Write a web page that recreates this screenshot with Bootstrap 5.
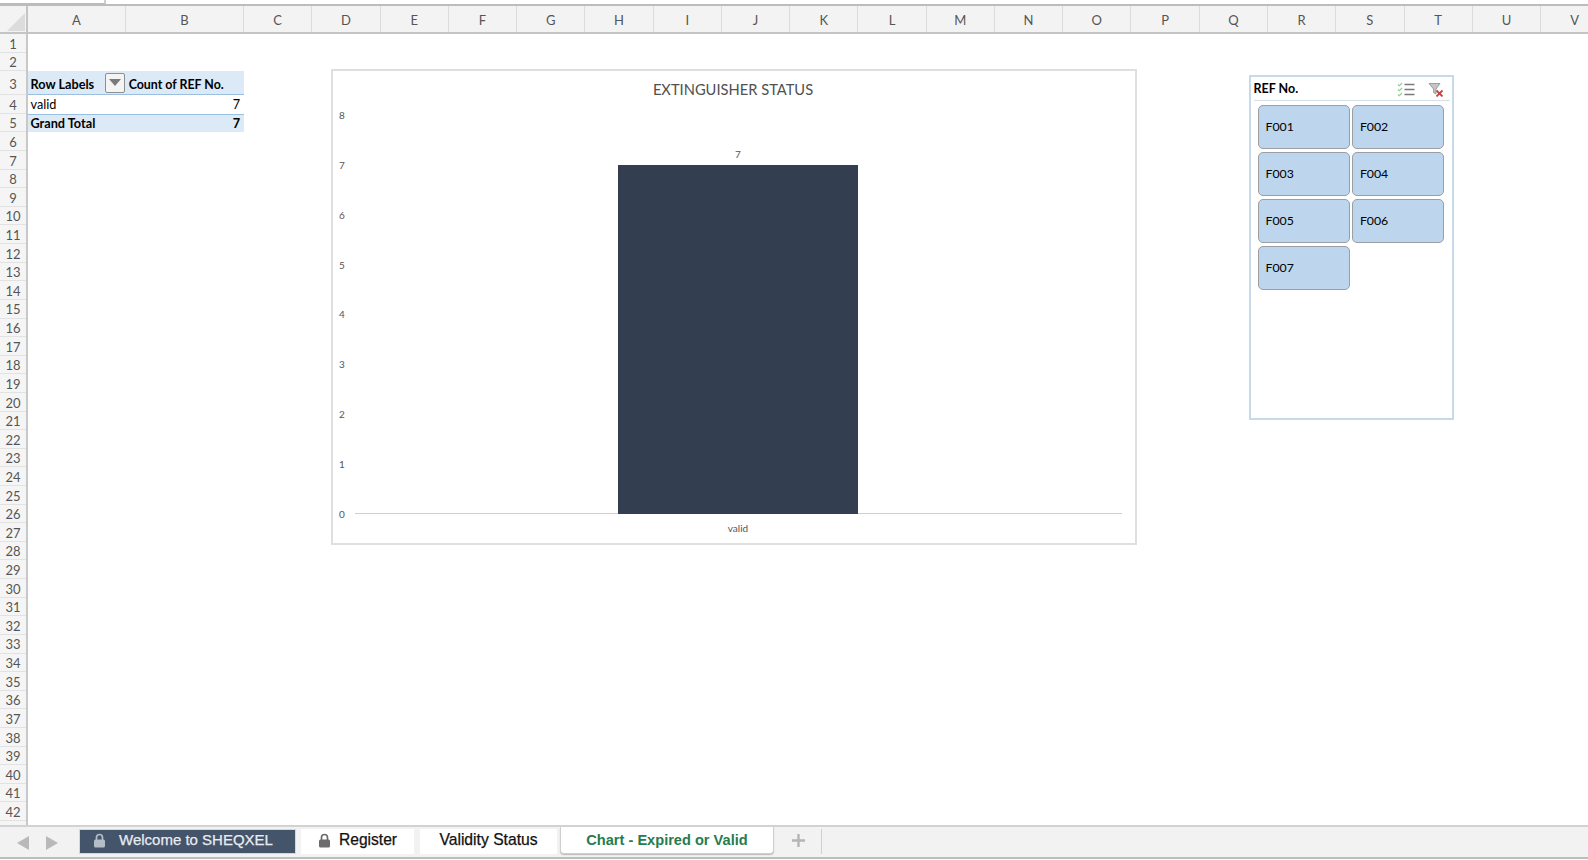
<!doctype html>
<html lang="en">
<head>
<meta charset="utf-8">
<title>Chart - Expired or Valid</title>
<link rel="stylesheet" href="https://cdn.jsdelivr.net/npm/bootstrap@5.3.0/dist/css/bootstrap.min.css">
<style>
html,body{height:100%;overflow:hidden;background:#fff;font-family:"Lato","Liberation Sans",sans-serif;color:#000}
.top-strip{height:6px;flex:none;border-bottom:2px solid #bcbcbc;background:#fff}
.strip-cell{width:106px;height:4px;border-right:2px solid #cfcfcf;border-bottom:1px solid #bcbcbc}
.col-head{height:28px;flex:none;background:#f3f3f3;border-bottom:2px solid #c4c4c4;display:grid;grid-template-columns:28px 98px 118px repeat(20,68.27px);font-size:13px;color:#555}
.col-head>div{display:flex;align-items:center;justify-content:center;border-right:1px solid #dcdcdc;padding-top:3px}
.col-head>.corner{border-right:2px solid #c4c4c4;padding:0}
.corner svg{width:18px;height:18px;margin-left:6px;margin-top:5px}
.sheet-body{flex:1 1 auto;min-height:0;display:flex;overflow:hidden}
.row-head{width:28px;flex:none;background:#f5f5f5;border-right:2px solid #c8c8c8;font-size:13px;color:#555;display:flex;flex-direction:column}
.row-head>div{height:18.62px;flex:none;display:flex;align-items:center;justify-content:center;border-bottom:1px solid #e2e2e2;padding-top:3px}
.row-head>div.tall{height:24px;padding-top:5px}
.canvas{position:relative;flex:1 1 auto;background:#fff}
.pivot{padding-top:37px;width:216px;font-size:12.7px;line-height:1}
.pv-row{display:flex;justify-content:space-between;align-items:center;height:18.6px;padding:1px 4px 0 2.5px}
.pv-head{height:24px;background:#dce9f6;border-bottom:1px solid #9bbfe0;font-weight:700;padding-top:4px;justify-content:flex-start}
.pv-total{background:#dce9f6;border-top:1px solid #9bbfe0;font-weight:700;padding-top:0}
.pv-count{font-size:12.4px;padding-top:1px}
.pv-drop{width:20px;height:20px;border:1px solid #8f8f8f;border-radius:2px;background:#f4f4f4;margin:-4px 4px 0 10.5px;display:flex;align-items:center;justify-content:center}
.pv-drop i{display:block;width:0;height:0;border-left:6px solid transparent;border-right:6px solid transparent;border-top:7px solid #7a7a7a}
.chart-box{position:absolute;left:303px;top:35px;width:806px;height:476px;border:2px solid #dfdfdf;background:#fff;color:#555}
.chart-title{position:absolute;left:0;right:2px;top:10px;text-align:center;font-size:14.7px;color:#505050;line-height:1.2}
.tick{position:absolute;left:6px;font-size:10px;line-height:12px;color:#555}
.axis{position:absolute;left:22px;right:13px;top:442px;height:1px;background:#cfcfcf}
.bar{position:absolute;left:285px;top:94px;width:240px;height:349px;background:#333f50}
.bar-val{position:absolute;left:285px;width:240px;top:77px;text-align:center;font-size:10px;line-height:12px;color:#555}
.cat{position:absolute;left:285px;width:240px;top:451px;text-align:center;font-size:10px;line-height:12px;color:#555}
.slicer{position:absolute;left:1221px;top:41px;width:205px;height:345px;border:2px solid #c6daec;background:#fff;padding:0 2.500px}
.sl-head{height:24px;display:flex;align-items:center;border-bottom:1px solid #d5dfe8;font-size:12.5px;font-weight:700;padding-top:1px}
.sl-icons{margin-left:auto;display:flex;gap:13px;align-items:center;padding-right:6px}
.sl-grid{display:grid;grid-template-columns:92px 92px;column-gap:2.4px;row-gap:3.2px;padding:3.500px 0 0 4px}
.sl-btn{height:44px;background:#bdd5ed;border:1.5px solid #9a9fa6;border-radius:5px;font-size:12.3px;display:flex;align-items:center;padding-left:7px;padding-top:1px}
.tabs-bar{height:34px;flex:none;margin-bottom:1px;background:#f2f2f2;border-top:2px solid #d2d2d2;border-bottom:2px solid #bdbdbd;display:flex;align-items:stretch;font-family:"Liberation Sans",Arial,sans-serif;font-size:15px;-webkit-text-stroke:.25px currentColor}
.nav-arrows{width:78px;flex:none;display:flex;align-items:center;justify-content:center;gap:17px;padding-right:3px;padding-top:1px}
.sheet-tab{display:flex;align-items:center;justify-content:center;margin:2px 0 0;height:25px;background:#fff;white-space:nowrap}
.tab-welcome{width:217px;background:#44546a;color:#e8ecf1;margin-left:1px;gap:13px;border:1px solid #d4d8dd;justify-content:flex-start;padding:0 0 3px 13px}
.tab-register{width:113px;margin-left:5px;gap:8px;color:#111;justify-content:flex-start;padding:0 0 3px 17px;font-size:15.6px}
.tab-validity{width:137px;margin-left:6px;color:#111;font-size:15.7px;padding-bottom:3px}
.tab-chart{width:214px;height:27px;margin:0 0 0 3px;padding-top:1px;color:#267c4d;border-radius:0 0 4px 4px;border:1px solid #cfcfcf;border-top:0;box-shadow:0 1px 1px #bbb;font-size:14.6px;font-weight:700;-webkit-text-stroke:0}
.tab-add{width:48px;display:flex;align-items:center;justify-content:center;border-right:1px solid #d0d0d0;margin:2px 0 3px;padding:0 0 2px 2px}
</style>
</head>
<body class="d-flex flex-column">
<div class="top-strip"><div class="strip-cell"></div></div>
<div class="col-head">
  <div class="corner"><svg viewBox="0 0 18 18"><path d="M18 0V18H0Z" fill="#dcdcdc"/></svg></div>
  <div>A</div><div>B</div><div>C</div><div>D</div><div>E</div><div>F</div><div>G</div><div>H</div><div>I</div><div>J</div><div>K</div><div>L</div><div>M</div><div>N</div><div>O</div><div>P</div><div>Q</div><div>R</div><div>S</div><div>T</div><div>U</div><div>V</div>
</div>
<div class="sheet-body">
  <div class="row-head">
    <div>1</div><div>2</div><div class="tall">3</div><div>4</div><div>5</div><div>6</div><div>7</div><div>8</div><div>9</div><div>10</div><div>11</div><div>12</div><div>13</div><div>14</div><div>15</div><div>16</div><div>17</div><div>18</div><div>19</div><div>20</div><div>21</div><div>22</div><div>23</div><div>24</div><div>25</div><div>26</div><div>27</div><div>28</div><div>29</div><div>30</div><div>31</div><div>32</div><div>33</div><div>34</div><div>35</div><div>36</div><div>37</div><div>38</div><div>39</div><div>40</div><div>41</div><div>42</div>
  </div>
  <div class="canvas">
    <div class="pivot">
      <div class="pv-row pv-head"><span>Row Labels</span><span class="pv-drop"><i></i></span><span class="pv-count">Count of REF No.</span></div>
      <div class="pv-row"><span>valid</span><span>7</span></div>
      <div class="pv-row pv-total"><span>Grand Total</span><span>7</span></div>
    </div>
    <div class="chart-box">
      <div class="chart-title">EXTINGUISHER STATUS</div>
      <div class="tick" style="top:38px">8</div>
      <div class="tick" style="top:88px">7</div>
      <div class="tick" style="top:138px">6</div>
      <div class="tick" style="top:188px">5</div>
      <div class="tick" style="top:237px">4</div>
      <div class="tick" style="top:287px">3</div>
      <div class="tick" style="top:337px">2</div>
      <div class="tick" style="top:387px">1</div>
      <div class="tick" style="top:437px">0</div>
      <div class="axis"></div>
      <div class="bar"></div>
      <div class="bar-val">7</div>
      <div class="cat">valid</div>
    </div>
    <div class="slicer">
      <div class="sl-head">REF No.
        <span class="sl-icons">
          <svg width="18" height="15" viewBox="0 0 18 15"><path d="M1 2.500l1.300 1.300L5 1M1 7.500l1.300 1.300L5 6M1 12.500l1.300 1.300L5 11" fill="none" stroke="#8ccb8c" stroke-width="1.100"/><path d="M7.500 2.500H17.500M7.500 7.500H17.500M7.500 12.500H17.500" stroke="#7a7a7a" stroke-width="1.400"/></svg>
          <svg width="16" height="15" viewBox="0 0 16 15"><path d="M1 1.500h11L8 7v5L5.500 10.500V7Z" fill="#c4c4c4" stroke="#8d8d8d" stroke-width=".8"/><path d="M8.500 8.500l6 6M14.500 8.500l-6 6" stroke="#cf4040" stroke-width="1.800"/></svg>
        </span>
      </div>
      <div class="sl-grid">
        <div class="sl-btn">F001</div><div class="sl-btn">F002</div>
        <div class="sl-btn">F003</div><div class="sl-btn">F004</div>
        <div class="sl-btn">F005</div><div class="sl-btn">F006</div>
        <div class="sl-btn">F007</div>
      </div>
    </div>
  </div>
</div>
<div class="tabs-bar">
  <div class="nav-arrows">
    <svg width="12" height="14" viewBox="0 0 12 14"><path d="M12 0V14L0 7Z" fill="#b9b9b9"/></svg>
    <svg width="12" height="14" viewBox="0 0 12 14"><path d="M0 0V14L12 7Z" fill="#b9b9b9"/></svg>
  </div>
  <div class="sheet-tab tab-welcome">
    <svg width="13" height="15" viewBox="0 0 13 15"><path d="M3.500 7V4.500a3 3 0 0 1 6 0V7" fill="none" stroke="#b4bcc7" stroke-width="1.700"/><rect x="1" y="6.500" width="11" height="8" rx="1.500" fill="#b4bcc7"/></svg>
    <span>Welcome to SHEQXEL</span>
  </div>
  <div class="sheet-tab tab-register">
    <svg width="13" height="15" viewBox="0 0 13 15"><path d="M3.500 7V4.500a3 3 0 0 1 6 0V7" fill="none" stroke="#6c6c6c" stroke-width="1.700"/><rect x="1" y="6.500" width="11" height="8" rx="1.500" fill="#6c6c6c"/></svg>
    <span>Register</span>
  </div>
  <div class="sheet-tab tab-validity">Validity Status</div>
  <div class="sheet-tab tab-chart">Chart - Expired or Valid</div>
  <div class="tab-add"><svg width="13" height="13" viewBox="0 0 13 13"><path d="M6.500 0v13M0 6.500h13" stroke="#b5b5b5" stroke-width="2.400"/></svg></div>
</div>
<script src="https://cdn.jsdelivr.net/npm/bootstrap@5.3.0/dist/js/bootstrap.bundle.min.js"></script>
</body>
</html>
